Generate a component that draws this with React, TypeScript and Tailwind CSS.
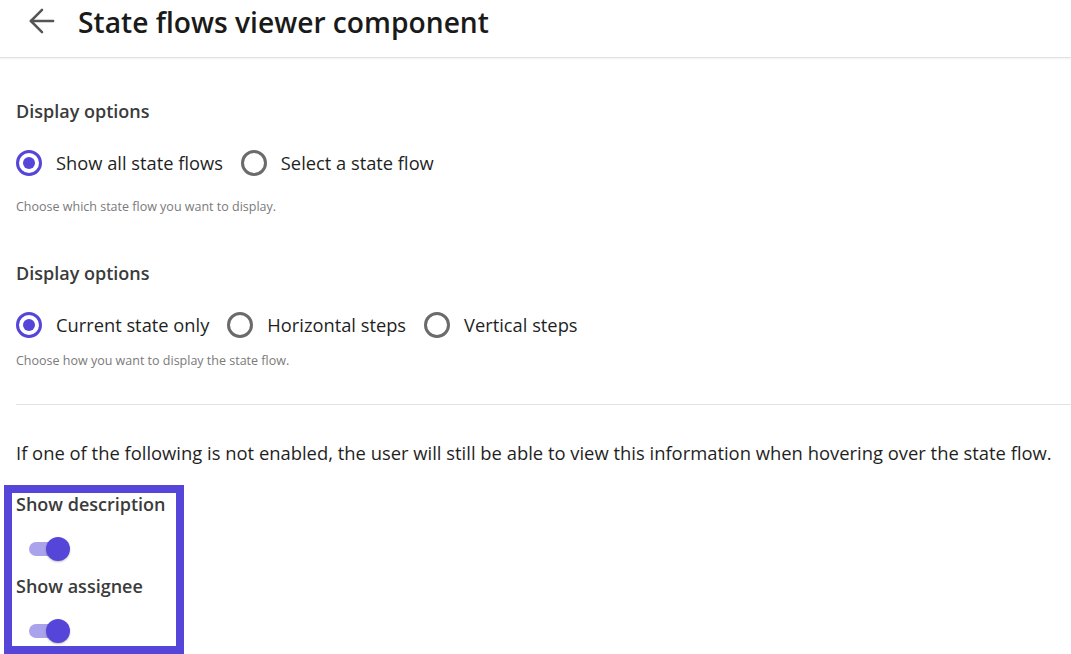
import { ArrowLeft } from 'lucide-react';

const font = { fontFamily: '"Open Sans", "Noto Sans", sans-serif' };

function Radio({ label, checked }: { label: string; checked?: boolean }) {
  return (
    <label className="flex items-center mr-[18px] cursor-pointer">
      <span
        className={`w-[26px] h-[26px] rounded-full border-[3px] flex items-center justify-center ${
          checked ? 'border-[#5546d9]' : 'border-[#6b6b6b]'
        }`}
      >
        {checked && <span className="w-[12px] h-[12px] rounded-full bg-[#5546d9]" />}
      </span>
      <span className="ml-[14px] text-[18.3px] leading-[24px] text-[#1f1f1f]">{label}</span>
    </label>
  );
}

function Toggle() {
  return (
    <div className="relative h-[24px] w-[42px] ml-[13px] flex items-center">
      <div className="h-[14px] w-[34px] rounded-full bg-[#aaa2ea]" />
      <div className="absolute left-[17px] top-0 w-[24px] h-[24px] rounded-full bg-[#5546d9] shadow-[0_1px_2px_rgba(0,0,0,0.25)]" />
    </div>
  );
}

export default function App() {
  return (
    <div className="min-h-screen bg-white text-[#1f1f1f]" style={font}>
      {/* Header */}
      <div className="h-[58px] flex items-start pt-[2px] border-b border-[#e2e2e2] shadow-[0_1px_2px_rgba(0,0,0,0.06)]">
        <button className="ml-[23px] text-[#555]">
          <ArrowLeft size={38} strokeWidth={1.6} />
        </button>
        <h1 className="ml-[17px] text-[28.2px] leading-[40px] font-semibold text-[#1a1a1a]">
          State flows viewer component
        </h1>
      </div>

      <div className="px-4">
        <h2 className="mt-[41px] text-[18px] leading-[24px] font-semibold text-[#3b3b3b]">Display options</h2>
        <div className="mt-[27px] flex items-center h-[26px]">
          <Radio label="Show all state flows" checked />
          <Radio label="Select a state flow" />
        </div>
        <p className="mt-[23px] text-[12.5px] leading-[16px] text-[#7a7a7a]">
          Choose which state flow you want to display.
        </p>

        <h2 className="mt-[46px] text-[18px] leading-[24px] font-semibold text-[#3b3b3b]">Display options</h2>
        <div className="mt-[27px] flex items-center h-[26px]">
          <Radio label="Current state only" checked />
          <Radio label="Horizontal steps" />
          <Radio label="Vertical steps" />
        </div>
        <p className="mt-[15px] text-[12.5px] leading-[16px] text-[#7a7a7a]">
          Choose how you want to display the state flow.
        </p>

        <div className="mt-[35px] h-px bg-[#e3e3e3] -mr-4" />

        <p className="mt-[36px] text-[18.4px] leading-[24px] text-[#1f1f1f] whitespace-nowrap">
          If one of the following is not enabled, the user will still be able to view this information when hovering over the state flow.
        </p>

        <div className="mt-[20px] -ml-[12px] w-[180px] border-[8px] border-[#5546d9] pl-[4px] pb-[3px]">
          <div className="text-[18px] leading-[22px] font-semibold text-[#3b3b3b]">Show description</div>
          <div className="mt-[22px]">
            <Toggle />
          </div>
          <div className="mt-[14px] text-[18px] leading-[22px] font-semibold text-[#3b3b3b]">Show assignee</div>
          <div className="mt-[22px]">
            <Toggle />
          </div>
        </div>
      </div>
    </div>
  );
}
